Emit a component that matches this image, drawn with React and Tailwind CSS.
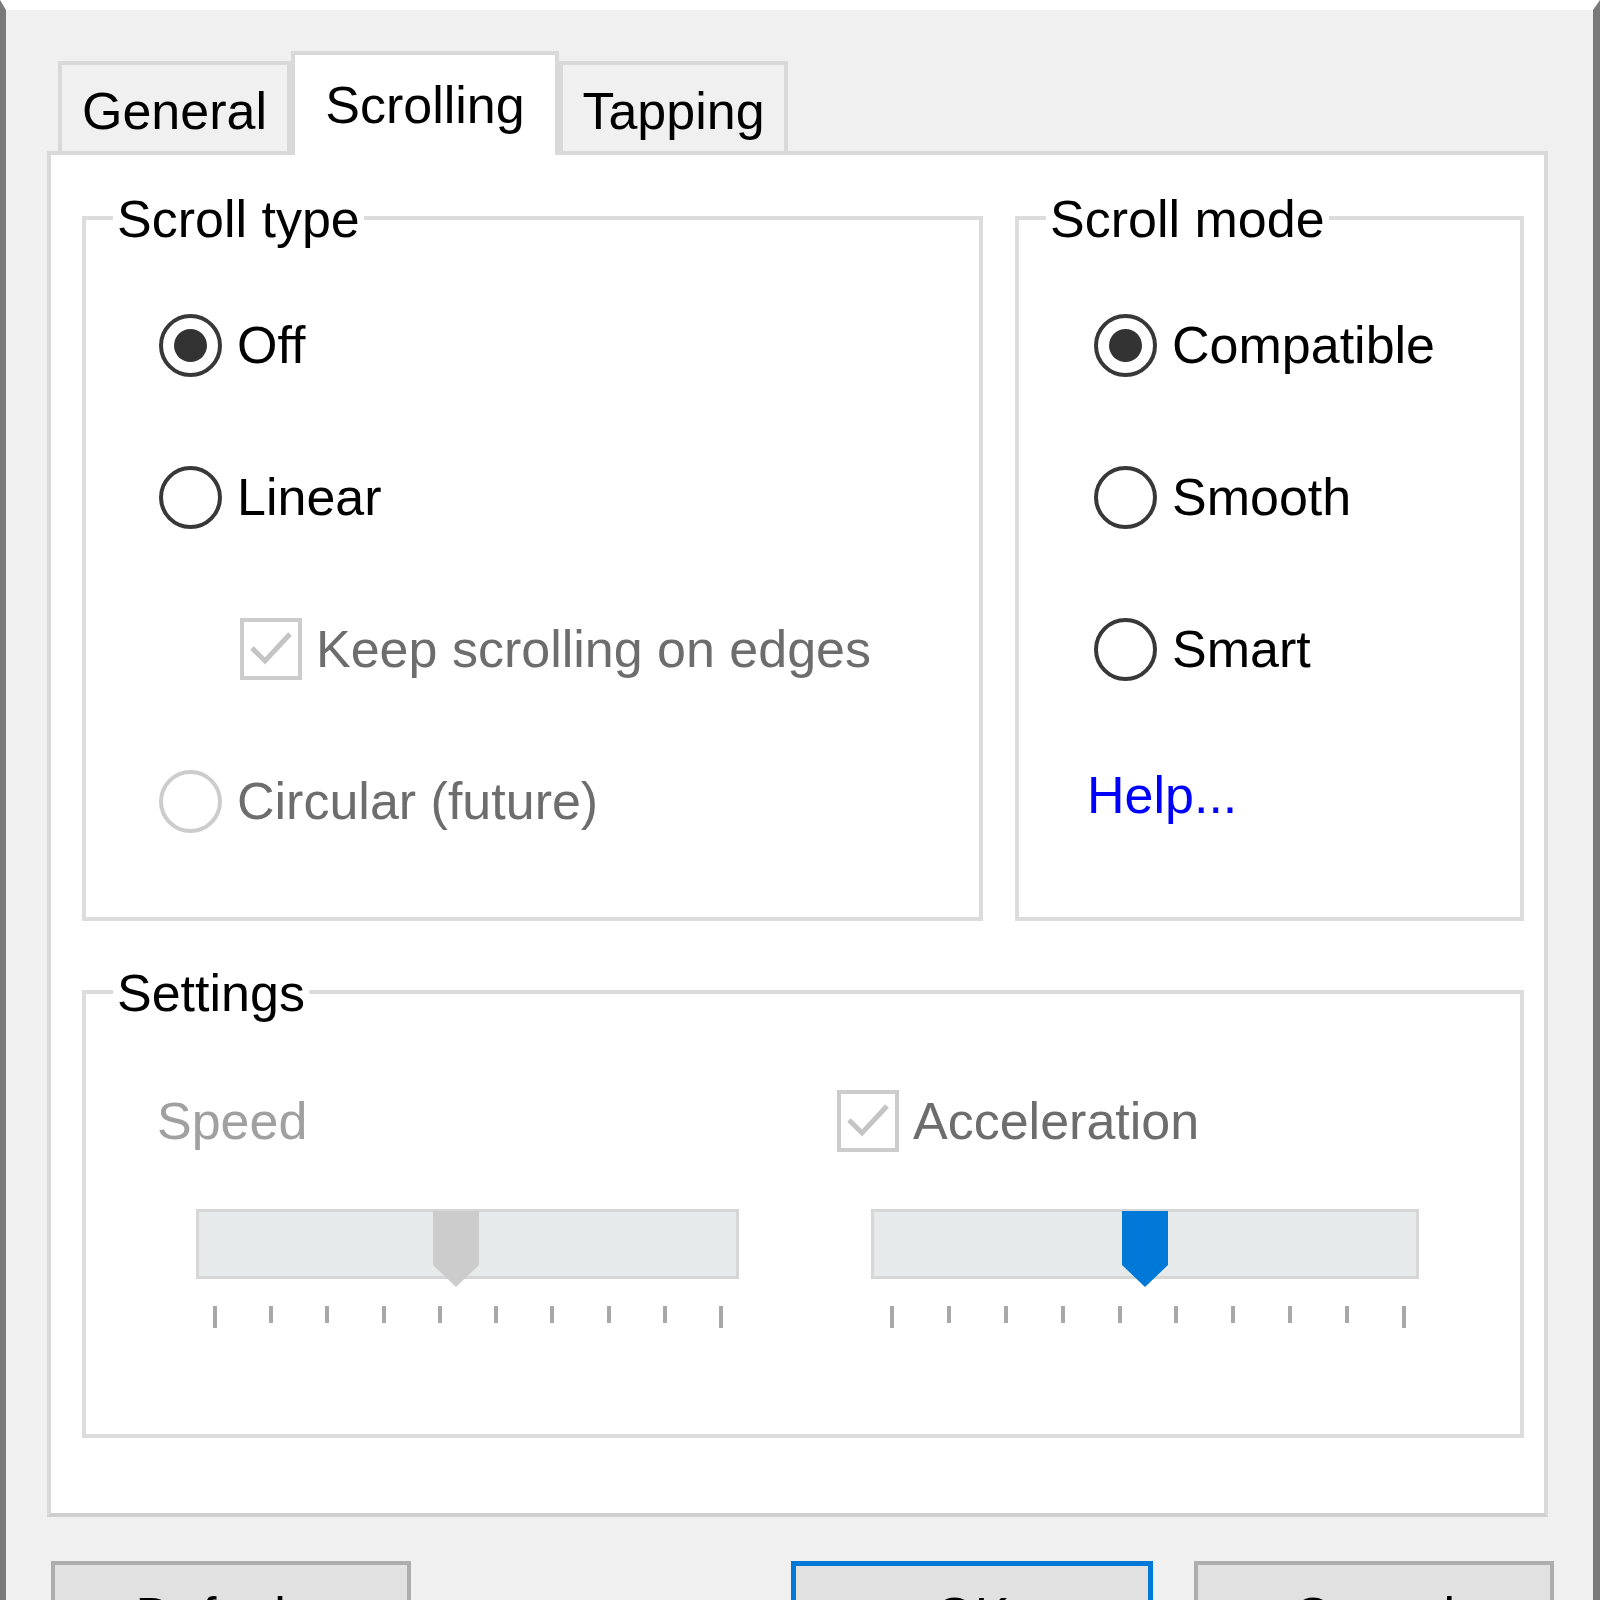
import React from "react";

const Radio = ({ checked, disabled, label }) => (
  <div className="flex items-center h-[64px] gap-[15px]">
    <div
      className={
        disabled
          ? "w-[63px] h-[63px] rounded-full border-[4px] border-[#cccccc] bg-white"
          : "w-[63px] h-[63px] rounded-full border-[4px] border-[#383838] bg-white flex items-center justify-center"
      }
    >
      {checked && <div className="w-[33px] h-[33px] rounded-full bg-[#333333]" />}
    </div>
    <span className={disabled ? "text-[#6d6d6d]" : "text-black"}>{label}</span>
  </div>
);

const CheckBox = ({ label, className = "" }) => (
  <div className={`flex items-center h-[64px] gap-[14px] ${className}`}>
    <div className="w-[62px] h-[62px] border-[4px] border-[#cccccc] bg-white">
      <svg viewBox="0 0 54 54" className="w-full h-full">
        <path d="M8 26 L21 39 L46 12" fill="none" stroke="#c4c4c4" strokeWidth="5" />
      </svg>
    </div>
    <span className="text-[#6d6d6d]">{label}</span>
  </div>
);

const Slider = ({ thumbLeft, active, width, tickPad }) => (
  <div className={width}>
    <div className="relative h-[70px] border-[3px] border-[#d6d6d6] bg-[#e7eaea]">
      <svg
        width="46"
        height="76"
        viewBox="0 0 46 76"
        className="absolute -top-[1px]"
        style={{ left: thumbLeft }}
      >
        <path d="M0 0 H46 V54 L23 76 L0 54 Z" fill={active ? "#0078d7" : "#cccccc"} />
      </svg>
    </div>
    <div className={`flex justify-between items-start mt-[27px] ${tickPad}`}>
      {Array.from({ length: 10 }).map((_, i) => (
        <div
          key={i}
          className={
            i === 0 || i === 9
              ? "w-[4px] h-[22px] bg-[#a8a8a8]"
              : "w-[4px] h-[17px] bg-[#a8a8a8]"
          }
        />
      ))}
    </div>
  </div>
);

const Group = ({ label, className, children }) => (
  <div className={`relative border-[4px] border-[#dcdcdc] ${className}`}>
    <span className="absolute -top-[29px] left-[27px] px-[4px] bg-white leading-[56px] text-black">
      {label}
    </span>
    {children}
  </div>
);

export default function App() {
  return (
    <div className="w-[1600px] h-[1600px] overflow-hidden bg-[#f0f0f0] border-l-[6px] border-r-[7px] border-[#7a7a7a] border-t-[10px] border-t-white font-['Liberation_Sans',Arial,sans-serif] text-[52px] leading-[56px] text-black">
      <div className="pl-[41px] pt-[41px]">
        {/* tabs */}
        <div className="flex items-end h-[100px] pl-[11px]">
          <div className="w-[233px] h-[90px] border-[4px] border-b-0 border-[#d9d9d9] bg-[#f0f0f0] flex items-center justify-center pt-[6px]">
            General
          </div>
          <div className="relative z-10 w-[268px] h-[104px] -mb-[4px] border-[4px] border-b-0 border-[#d9d9d9] bg-white flex items-center justify-center">
            Scrolling
          </div>
          <div className="w-[229px] h-[90px] border-[4px] border-b-0 border-[#d9d9d9] bg-[#f0f0f0] flex items-center justify-center pt-[6px]">
            Tapping
          </div>
        </div>

        {/* panel */}
        <div className="w-[1501px] h-[1366px] border-[4px] border-[#d9d9d9] border-b-[#cfcfcf] bg-white pt-[61px] pl-[31px]">
          <div className="flex gap-[32px]">
            <Group label="Scroll type" className="w-[901px] h-[705px]">
              <div className="flex flex-col gap-[88px] pt-[93px] pl-[73px]">
                <Radio checked label="Off" />
                <Radio label="Linear" />
                <CheckBox label="Keep scrolling on edges" className="ml-[81px]" />
                <Radio disabled label="Circular (future)" />
              </div>
            </Group>
            <Group label="Scroll mode" className="w-[509px] h-[705px]">
              <div className="flex flex-col gap-[88px] pt-[93px] pl-[75px]">
                <Radio checked label="Compatible" />
                <Radio label="Smooth" />
                <Radio label="Smart" />
                <div className="h-[64px] -mt-[6px] -ml-[7px] flex items-center text-[#0000ff]">
                  Help...
                </div>
              </div>
            </Group>
          </div>

          <Group label="Settings" className="mt-[69px] w-[1442px] h-[448px]">
            <div className="flex pt-[96px]">
              <div className="ml-[71px] w-[680px]">
                <div className="h-[62px] flex items-center text-[#a0a0a0]">Speed</div>
                <div className="mt-[57px] ml-[39px]">
                  <Slider thumbLeft={234} width="w-[543px]" tickPad="pl-[17px] pr-[16px]" />
                </div>
              </div>
              <div>
                <div className="h-[62px] flex items-center">
                  <CheckBox label="Acceleration" />
                </div>
                <div className="mt-[57px] ml-[34px]">
                  <Slider active thumbLeft={248} width="w-[548px]" tickPad="pl-[19px] pr-[13px]" />
                </div>
              </div>
            </div>
          </Group>
        </div>

        {/* buttons */}
        <div className="flex mt-[44px] ml-[4px]">
          <div className="w-[360px] h-[110px] border-[4px] border-[#adadad] bg-[#e1e1e1] flex items-center justify-center">
            Defaults
          </div>
          <div className="ml-[380px] w-[362px] h-[110px] border-[5px] border-[#0078d7] bg-[#e1e1e1] flex items-center justify-center">
            OK
          </div>
          <div className="ml-[41px] w-[360px] h-[110px] border-[4px] border-[#adadad] bg-[#e1e1e1] flex items-center justify-center">
            Cancel
          </div>
        </div>
      </div>
    </div>
  );
}
